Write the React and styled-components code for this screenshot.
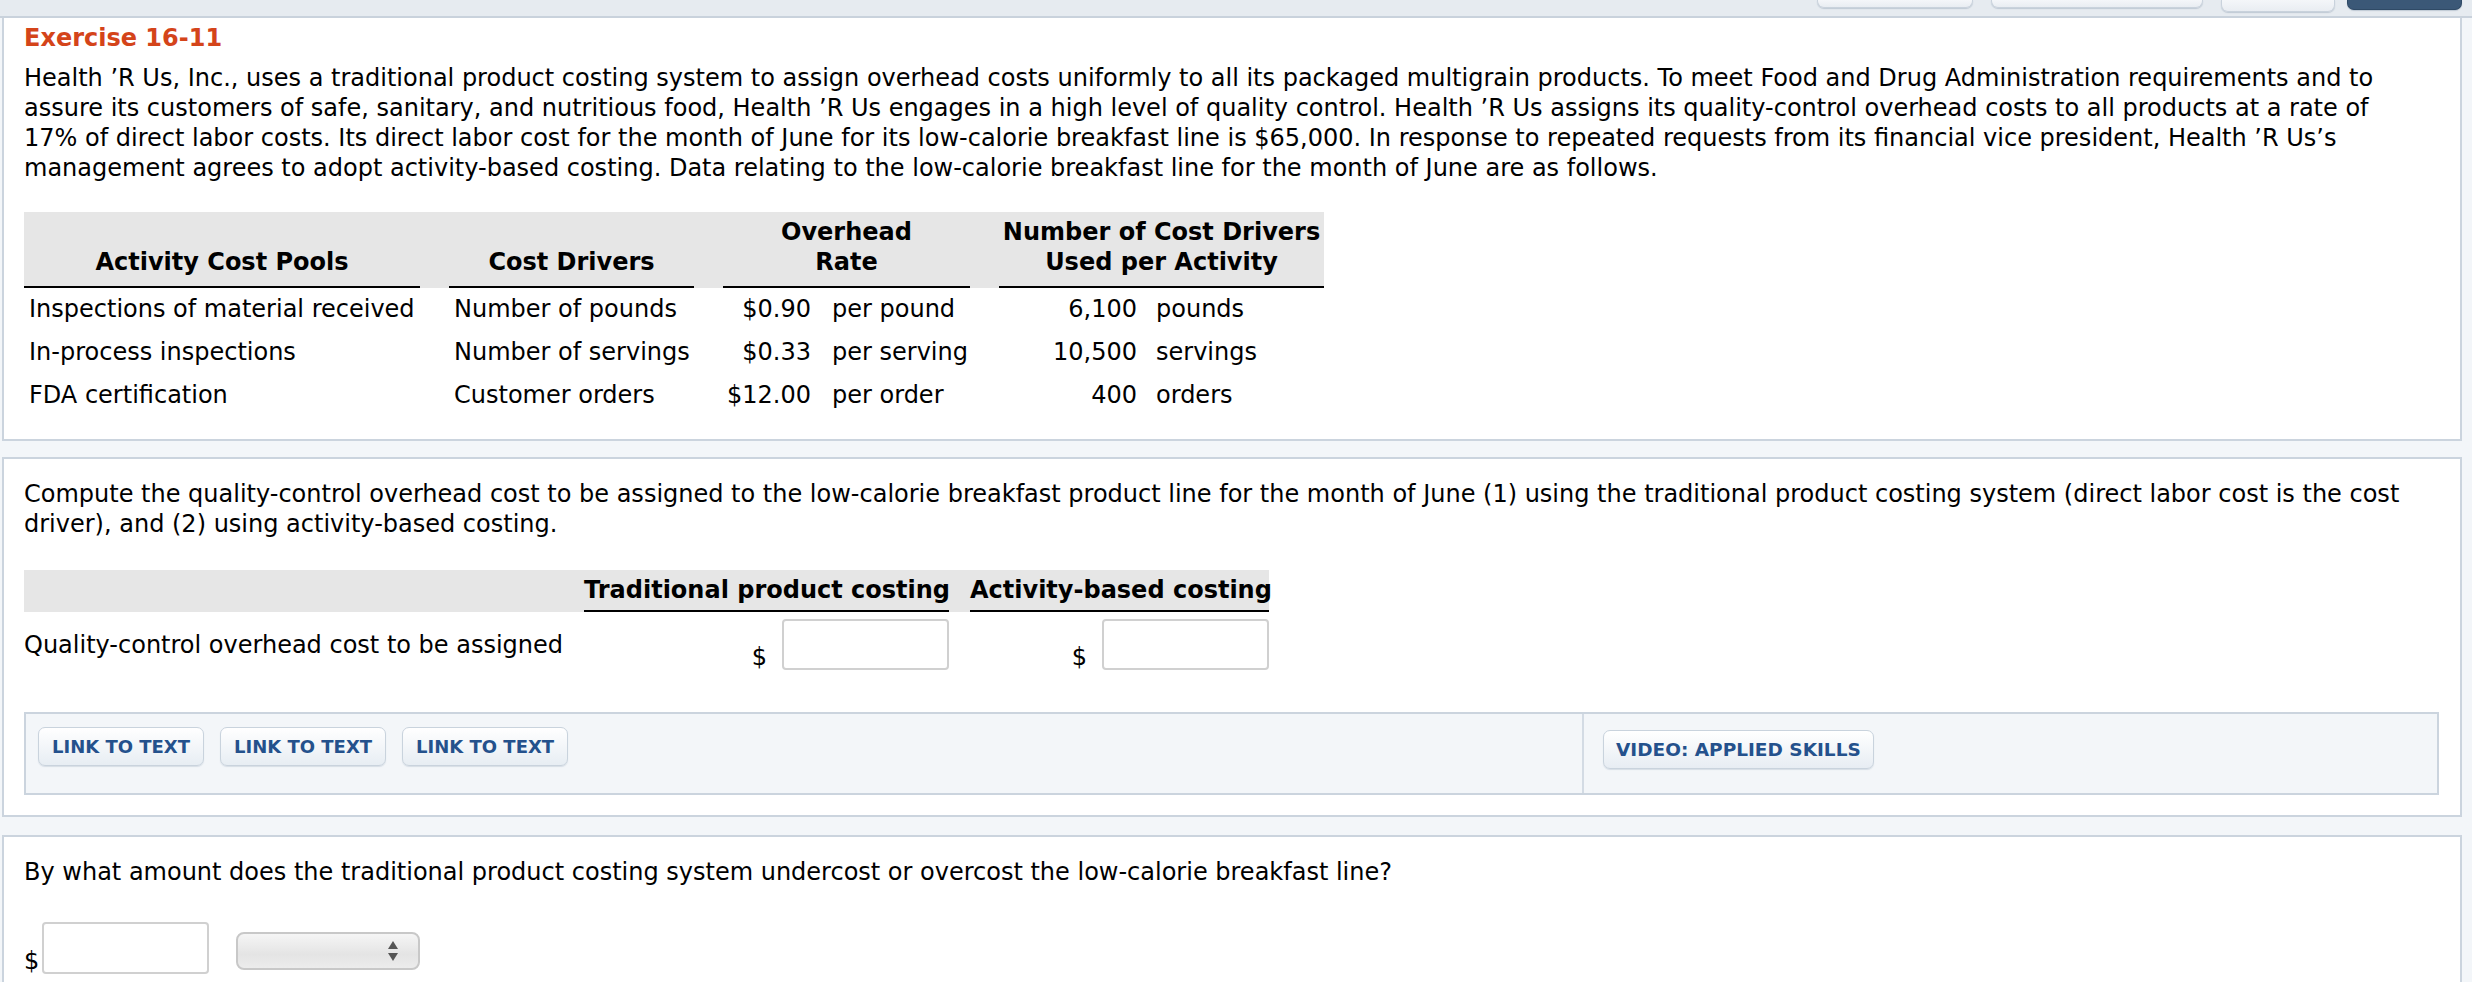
import React from "react";
import styled, { createGlobalStyle } from "styled-components";

const GlobalStyle = createGlobalStyle`
  html, body { margin: 0; padding: 0; }
  body {
    background: #f3f6f9;
    font-family: "DejaVu Sans", Verdana, sans-serif;
    font-size: 24px;
    line-height: 30px;
    color: #000;
  }
  * { box-sizing: border-box; }
`;

const Page = styled.div`
  width: 2472px;
  display: flex;
  flex-direction: column;
`;

const TopBar = styled.div`
  height: 18px;
  background: #e6ebf0;
  border-bottom: 2px solid #c9d2dc;
  display: flex;
  justify-content: flex-end;
  align-items: flex-start;
  padding-right: 10px;
`;

const TopButton = styled.div`
  width: ${(p) => p.$w}px;
  height: ${(p) => p.$h}px;
  margin-left: ${(p) => p.$ml}px;
  border: 1px solid ${(p) => (p.$dark ? "#2f4a66" : "#c9d2dc")};
  border-top: none;
  border-radius: 0 0 7px 7px;
  background: ${(p) => (p.$dark ? "#3b5877" : "linear-gradient(#f4f6f9, #e9edf2)")};
  box-shadow: 0 1px 1px rgba(120, 140, 160, 0.35);
`;

const Main = styled.main`
  display: flex;
  flex-direction: column;
  padding: 0 10px 0 2px;
`;

const Card = styled.section`
  background: #fff;
  border: 2px solid #cbd4de;
  ${(p) => (p.$flushTop ? "border-top: none;" : "")}
  margin-top: ${(p) => p.$mt || 0}px;
  padding: ${(p) => p.$pt}px 21px ${(p) => p.$pb}px 20px;
`;

const Title = styled.h1`
  margin: 0;
  font-size: 24px;
  line-height: 30px;
  font-weight: bold;
  color: #d4441a;
`;

const Para = styled.p`
  margin: ${(p) => p.$mt || 0}px 0 0;
  max-width: 2392px;
  font-size: 24px;
  line-height: 30px;
`;

/* ---------- cost pool table ---------- */

const PoolTable = styled.div`
  margin-top: 29px;
  width: 1300px;
`;

const PoolGrid = styled.div`
  display: grid;
  grid-template-columns: 396px 245px 247px 325px;
  column-gap: 29px;
`;

const PoolHead = styled(PoolGrid)`
  background: #e6e6e6;
  padding-top: 5px;
  align-items: end;
`;

const HeadCell = styled.div`
  font-weight: bold;
  text-align: center;
  white-space: nowrap;
  padding-bottom: ${(p) => p.$pb}px;
  border-bottom: 2px solid ${(p) => (p.$plain ? "transparent" : "#000")};
`;

const PoolRow = styled(PoolGrid)`
  height: 43px;
  padding-top: 6px;
`;

const TextCell = styled.div`
  padding-left: ${(p) => (p.$flush ? 0 : 5)}px;
  white-space: nowrap;
`;

const QtyCell = styled.div`
  display: grid;
  grid-template-columns: ${(p) => p.$amt}px auto;
  column-gap: ${(p) => p.$gap}px;
  white-space: nowrap;
`;

const Amount = styled.span`
  text-align: right;
`;

/* ---------- assignment table ---------- */

const AssignTable = styled.div`
  margin-top: 31px;
  width: 1245px;
`;

const AssignGrid = styled.div`
  display: grid;
  grid-template-columns: 539px 365px 299px;
  column-gap: 21px;
`;

const AssignHead = styled(AssignGrid)`
  background: #e6e6e6;
  padding-top: 5px;
`;

const AssignRow = styled(AssignGrid)`
  padding-top: 7px;
  align-items: center;
`;

const ValueCell = styled.div`
  display: flex;
  justify-content: flex-end;
  align-items: flex-end;
  gap: 15px;
`;

const Dollar = styled.span`
  line-height: 30px;
  margin-bottom: -2px;
`;

const AmountInput = styled.input`
  width: ${(p) => p.$w || 167}px;
  height: ${(p) => p.$h || 51}px;
  border: 2px solid #d0d0d0;
  border-radius: 4px;
  background: #fff;
  font: inherit;
  padding: 0 6px;
  outline: none;
`;

/* ---------- resource links ---------- */

const LinkBox = styled.div`
  margin-top: 42px;
  display: flex;
  background: #f3f6f9;
  border: 2px solid #cbd4de;
  height: 83px;
`;

const LinkGroup = styled.div`
  display: flex;
  align-items: flex-start;
  gap: 16px;
  width: ${(p) => (p.$w ? `${p.$w}px` : "auto")};
  flex: ${(p) => (p.$w ? "none" : "1")};
  padding: ${(p) => p.$pt}px 0 0 ${(p) => p.$pl}px;
  border-right: ${(p) => (p.$divider ? "2px solid #d3dbe4" : "none")};
`;

const LinkButton = styled.button`
  height: 39px;
  padding: 0 ${(p) => p.$px || 13}px;
  display: flex;
  align-items: center;
  font-family: "DejaVu Sans", Verdana, sans-serif;
  font-size: ${(p) => p.$fs || 18}px;
  font-weight: bold;
  color: #24518c;
  background: linear-gradient(#ffffff, #e7edf3);
  border: 1.5px solid #c9d3dd;
  border-radius: 7px;
  box-shadow: 0 1px 1px rgba(150, 165, 185, 0.3);
  white-space: nowrap;
  cursor: pointer;
`;

/* ---------- last question ---------- */

const AnswerRow = styled.div`
  margin-top: 35px;
  display: flex;
  align-items: flex-end;
`;

const SmallDollar = styled.span`
  line-height: 30px;
  margin-right: 3px;
  margin-bottom: -2px;
`;

const SelectBox = styled.div`
  width: 184px;
  height: 38px;
  margin-left: 27px;
  margin-bottom: 4px;
  border: 2px solid #c8c8c8;
  border-radius: 8px;
  background: linear-gradient(#f5f5f5, #e4e4e4 60%, #ececec);
  display: flex;
  align-items: center;
  justify-content: flex-end;
  padding-right: 19px;
`;

function Arrows() {
  return (
    <svg width="12" height="22" viewBox="0 0 12 22">
      <path d="M6 1 L11 9 L1 9 Z" fill="#555" />
      <path d="M6 21 L11 13 L1 13 Z" fill="#555" />
    </svg>
  );
}

const pools = [
  ["Inspections of material received", "Number of pounds", "$0.90", "per pound", "6,100", "pounds"],
  ["In-process inspections", "Number of servings", "$0.33", "per serving", "10,500", "servings"],
  ["FDA certification", "Customer orders", "$12.00", "per order", "400", "orders"],
];

export default function App() {
  return (
    <>
      <GlobalStyle />
      <Page>
        <TopBar>
          <TopButton $w={156} $h={8} $ml={0} />
          <TopButton $w={212} $h={8} $ml={18} />
          <TopButton $w={114} $h={12} $ml={18} />
          <TopButton $w={115} $h={10} $ml={12} $dark />
        </TopBar>
        <Main>
          <Card $flushTop $pt={5} $pb={22}>
            <Title>Exercise 16-11</Title>
            <Para $mt={10}>
              Health ’R Us, Inc., uses a traditional product costing system to assign overhead costs uniformly to all its packaged multigrain products. To meet Food and Drug Administration requirements and to assure its customers of safe, sanitary, and nutritious food, Health ’R Us engages in a high level of quality control. Health ’R Us assigns its quality-control overhead costs to all products at a rate of 17% of direct labor costs. Its direct labor cost for the month of June for its low-calorie breakfast line is $65,000. In response to repeated requests from its financial vice president, Health ’R Us’s management agrees to adopt activity-based costing. Data relating to the low-calorie breakfast line for the month of June are as follows.
            </Para>
            <PoolTable>
              <PoolHead>
                <HeadCell $pb={9}>Activity Cost Pools</HeadCell>
                <HeadCell $pb={9}>Cost Drivers</HeadCell>
                <HeadCell $pb={9}>
                  Overhead
                  <br />
                  Rate
                </HeadCell>
                <HeadCell $pb={9}>
                  Number of Cost Drivers
                  <br />
                  Used per Activity
                </HeadCell>
              </PoolHead>
              {pools.map((r) => (
                <PoolRow key={r[0]}>
                  <TextCell>{r[0]}</TextCell>
                  <TextCell>{r[1]}</TextCell>
                  <QtyCell $amt={88} $gap={21}>
                    <Amount>{r[2]}</Amount>
                    <span>{r[3]}</span>
                  </QtyCell>
                  <QtyCell $amt={138} $gap={19}>
                    <Amount>{r[4]}</Amount>
                    <span>{r[5]}</span>
                  </QtyCell>
                </PoolRow>
              ))}
            </PoolTable>
          </Card>

          <Card $mt={16} $pt={20} $pb={20}>
            <Para>
              Compute the quality-control overhead cost to be assigned to the low-calorie breakfast product line for the month of June (1) using the traditional product costing system (direct labor cost is the cost driver), and (2) using activity-based costing.
            </Para>
            <AssignTable>
              <AssignHead>
                <HeadCell $pb={5} $plain />
                <HeadCell $pb={5}>Traditional product costing</HeadCell>
                <HeadCell $pb={5}>Activity-based costing</HeadCell>
              </AssignHead>
              <AssignRow>
                <TextCell $flush>Quality-control overhead cost to be assigned</TextCell>
                <ValueCell>
                  <Dollar>$</Dollar>
                  <AmountInput type="text" />
                </ValueCell>
                <ValueCell>
                  <Dollar>$</Dollar>
                  <AmountInput type="text" />
                </ValueCell>
              </AssignRow>
            </AssignTable>
            <LinkBox>
              <LinkGroup $w={1558} $pt={13} $pl={12} $divider>
                <LinkButton>LINK TO TEXT</LinkButton>
                <LinkButton>LINK TO TEXT</LinkButton>
                <LinkButton>LINK TO TEXT</LinkButton>
              </LinkGroup>
              <LinkGroup $pt={16} $pl={19}>
                <LinkButton $px={12} $fs={18.5}>VIDEO: APPLIED SKILLS</LinkButton>
              </LinkGroup>
            </LinkBox>
          </Card>

          <Card $mt={18} $pt={20} $pb={20}>
            <Para>
              By what amount does the traditional product costing system undercost or overcost the low-calorie breakfast line?
            </Para>
            <AnswerRow>
              <SmallDollar>$</SmallDollar>
              <AmountInput type="text" $w={167} $h={52} />
              <SelectBox>
                <Arrows />
              </SelectBox>
            </AnswerRow>
          </Card>
        </Main>
      </Page>
    </>
  );
}
